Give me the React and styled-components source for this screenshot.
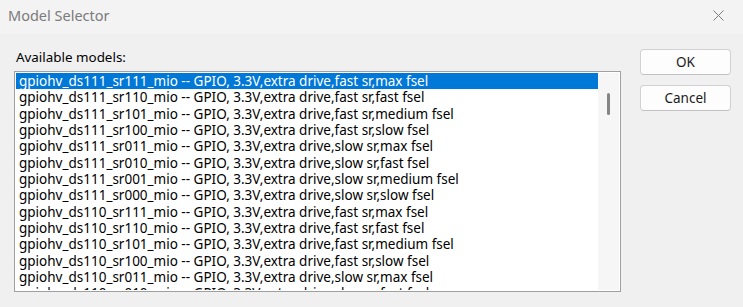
import React from "react";
import styled, { createGlobalStyle } from "styled-components";

const GlobalStyle = createGlobalStyle`
  html, body {
    margin: 0;
    padding: 0;
    background: #f0f0f0;
  }
  body {
    font-family: "Noto Sans", "Open Sans", sans-serif;
  }
`;

const Window = styled.div`
  width: 743px;
  height: 307px;
  display: flex;
  flex-direction: column;
  background: #f0f0f0;
  overflow: hidden;
`;

const TitleBar = styled.div`
  height: 34px;
  flex: none;
  display: flex;
  align-items: center;
  justify-content: space-between;
  padding: 0 19px 4px 8px;
  box-sizing: border-box;
  background: #f3f3f3;
`;

const Title = styled.span`
  font-size: 14.5px;
  color: #7b7b7b;
`;

const CloseIcon = styled.svg`
  width: 11px;
  height: 11px;
  stroke: #7d7d7d;
  stroke-width: 1;
`;

const Body = styled.div`
  flex: 1;
  display: flex;
  gap: 19px;
  padding: 15px 12px 0 14px;
`;

const LeftColumn = styled.div`
  width: 607px;
  display: flex;
  flex-direction: column;
`;

const Label = styled.div`
  font-size: 13.4px;
  line-height: 16px;
  color: #000;
  padding-left: 2px;
  margin-bottom: 6px;
`;

const ListBox = styled.div`
  height: 221px;
  box-sizing: border-box;
  border: 1px solid #a0a0a0;
  background: #fff;
  padding: 1px;
  display: flex;
  overflow: hidden;
`;

const Rows = styled.div`
  flex: 1;
  overflow: hidden;
`;

const Row = styled.div`
  height: 16.35px;
  line-height: 16px;
  padding-left: 3px;
  font-size: 13.5px;
  white-space: nowrap;
  color: ${(p) => (p.$selected ? "#fff" : "#000")};
  background: ${(p) => (p.$selected ? "#0078d7" : "transparent")};
`;

const ScrollTrack = styled.div`
  width: 21px;
  flex: none;
  background: #f6f6f6;
  display: flex;
  justify-content: center;
  padding-top: 20px;
  box-sizing: border-box;
`;

const Thumb = styled.div`
  width: 3px;
  height: 22px;
  border-radius: 2px;
  background: #858585;
`;

const ButtonColumn = styled.div`
  display: flex;
  flex-direction: column;
  gap: 10px;
`;

const Button = styled.button`
  width: 91px;
  height: 26px;
  box-sizing: border-box;
  border: 1px solid #d1d1d1;
  border-bottom-color: #c2c2c2;
  border-radius: 4px;
  background: #fdfdfd;
  font-family: "Noto Sans", "Open Sans", sans-serif;
  font-size: 13.5px;
  color: #1a1a1a;
  padding: 0;
`;

const speeds = { "11": "max", "10": "fast", "01": "medium", "00": "slow" };

const models = [];
["111", "110"].forEach((ds) => {
  ["111", "110", "101", "100", "011", "010", "001", "000"].forEach((sr) => {
    models.push(
      `gpiohv_ds${ds}_sr${sr}_mio -- GPIO, 3.3V,extra drive,${
        sr[0] === "1" ? "fast" : "slow"
      } sr,${speeds[sr.slice(1)]} fsel`
    );
  });
});

const App = () => (
  <>
    <GlobalStyle />
    <Window>
      <TitleBar>
        <Title>Model Selector</Title>
        <CloseIcon viewBox="0 0 11 11">
          <path d="M0.5 0.5 L10.5 10.5 M10.5 0.5 L0.5 10.5" />
        </CloseIcon>
      </TitleBar>
      <Body>
        <LeftColumn>
          <Label>Available models:</Label>
          <ListBox>
            <Rows>
              {models.slice(0, 14).map((m, i) => (
                <Row key={m} $selected={i === 0}>
                  {m}
                </Row>
              ))}
            </Rows>
            <ScrollTrack>
              <Thumb />
            </ScrollTrack>
          </ListBox>
        </LeftColumn>
        <ButtonColumn>
          <Button>OK</Button>
          <Button>Cancel</Button>
        </ButtonColumn>
      </Body>
    </Window>
  </>
);

export default App;
